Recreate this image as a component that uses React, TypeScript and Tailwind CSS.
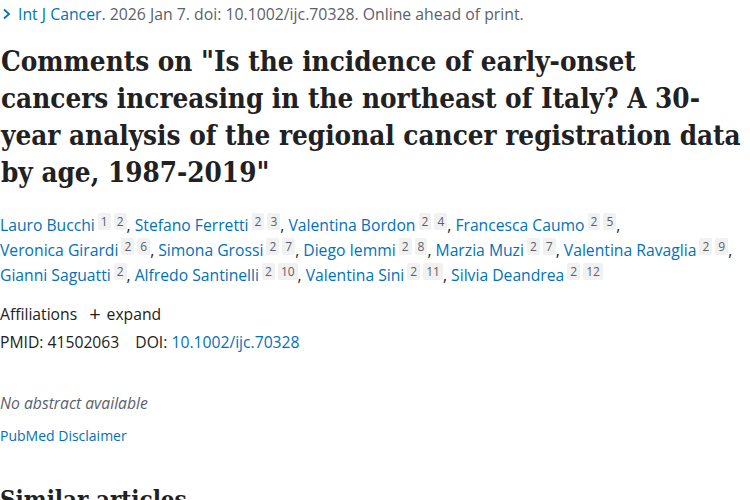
import React from "react";

const body = { fontFamily: '"Open Sans", "Noto Sans", sans-serif' };
const serif = { fontFamily: '"DejaVu Serif", serif', fontStretch: "condensed" as const };

type A = { name: string; refs: string[]; last?: boolean };

const rows: A[][] = [
  [
    { name: "Lauro Bucchi", refs: ["1", "2"] },
    { name: "Stefano Ferretti", refs: ["2", "3"] },
    { name: "Valentina Bordon", refs: ["2", "4"] },
    { name: "Francesca Caumo", refs: ["2", "5"] },
  ],
  [
    { name: "Veronica Girardi", refs: ["2", "6"] },
    { name: "Simona Grossi", refs: ["2", "7"] },
    { name: "Diego Iemmi", refs: ["2", "8"] },
    { name: "Marzia Muzi", refs: ["2", "7"] },
    { name: "Valentina Ravaglia", refs: ["2", "9"] },
  ],
  [
    { name: "Gianni Saguatti", refs: ["2"] },
    { name: "Alfredo Santinelli", refs: ["2", "10"] },
    { name: "Valentina Sini", refs: ["2", "11"] },
    { name: "Silvia Deandrea", refs: ["2", "12"], last: true },
  ],
];

function Author({ a }: { a: A }) {
  return (
    <span>
      <span className="text-[#0071bc]">{a.name}</span>
      {a.refs.map((r, i) => (
        <span
          key={i}
          className="relative -top-[5px] ml-[3px] inline-block rounded-[2px] bg-[#f1f1f1] px-[3px] text-[12px] leading-[17px] text-[#5b616b]"
        >
          {r}
        </span>
      ))}
      {!a.last && <span className="text-[#212121]">, </span>}
    </span>
  );
}

export default function App() {
  return (
    <div className="h-[500px] w-[750px] overflow-hidden bg-white text-[#212121]" style={body}>
      <div className="flex items-center pl-[2px] pt-[3px] text-[15.8px] leading-[22px] text-[#5b616b]">
        <svg width="10" height="12" viewBox="0 0 10 12" className="mr-[6px]">
          <path d="M2 1.5 L7 6 L2 10.5" fill="none" stroke="#0071bc" strokeWidth="1.8" />
        </svg>
        <span className="text-[#0071bc]">Int J Cancer.</span>
        <span>&nbsp;2026 Jan 7. doi: 10.1002/ijc.70328. Online ahead of print.</span>
      </div>

      <h1
        className="mt-[18px] pl-[1px] text-[27.6px] font-bold leading-[37px] text-[#212121]"
        style={serif}
      >
        Comments on "Is the incidence of early-onset
        <br />
        cancers increasing in the northeast of Italy? A 30-
        <br />
        year analysis of the regional cancer registration data
        <br />
        by age, 1987-2019"
      </h1>

      <div className="mt-[22px] text-[15.7px] leading-[25px]">
        {rows.map((row, i) => (
          <div key={i} className="whitespace-nowrap">
            {row.map((a, j) => (
              <Author key={j} a={a} />
            ))}
          </div>
        ))}
      </div>

      <div className="mt-[15px] flex items-center text-[15.7px] leading-[22px]">
        <span>Affiliations</span>
        <span className="ml-[12px] text-[20px] leading-[20px]">+</span>
        <span className="ml-[6px]">expand</span>
      </div>
      <div className="mt-[6px] text-[15.7px] leading-[22px]">
        <span>PMID: 41502063</span>
        <span className="ml-[16px]">DOI: </span>
        <span className="text-[#0071bc]">10.1002/ijc.70328</span>
      </div>

      <div className="mt-[39px] text-[15.7px] italic leading-[22px] text-[#5b616b]">No abstract available</div>
      <div className="mt-[12px] text-[14px] leading-[20px] text-[#0071bc]">PubMed Disclaimer</div>

      <h2 className="mt-[38px] text-[24px] font-bold leading-[32px]" style={serif}>
        Similar articles
      </h2>
    </div>
  );
}
